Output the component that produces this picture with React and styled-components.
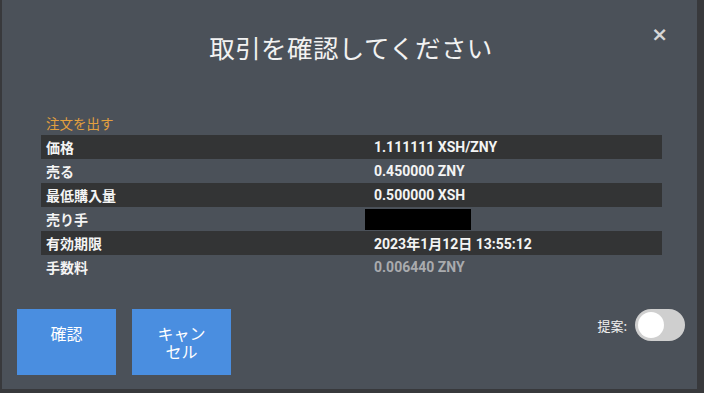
import React from 'react';
import styled, { createGlobalStyle } from 'styled-components';

const GlobalStyle = createGlobalStyle`
  html, body {
    margin: 0;
    padding: 0;
    background: #38393c;
    overflow: hidden;
  }
  body {
    font-family: Roboto, "Noto Sans CJK JP", sans-serif;
  }
`;

const Page = styled.div`
  width: 704px;
  height: 393px;
  padding: 0 7px 4px 2px;
  box-sizing: border-box;
`;

const Modal = styled.div`
  position: relative;
  height: 100%;
  background: #4b5159;
  display: flex;
  flex-direction: column;
  padding: 0 12px 14px 15px;
  box-sizing: border-box;
`;

const Title = styled.h1`
  margin: 29px 0 0;
  text-align: center;
  font-family: "Noto Sans CJK JP", sans-serif;
  font-weight: 400;
  font-size: 25.5px;
  line-height: 36px;
  color: #f2f2f2;
  letter-spacing: 0.4px;
`;

const Close = styled.button`
  position: absolute;
  top: 24px;
  right: 29px;
  background: none;
  border: 0;
  padding: 0;
  color: #d6d6d6;
  font-family: "DejaVu Sans", sans-serif;
  font-size: 20px;
  line-height: 20px;
  font-weight: bold;
  cursor: pointer;
`;

const Details = styled.section`
  margin: 49px 23px 0 24px;
`;

const SectionLabel = styled.div`
  font-family: "Noto Sans CJK JP", sans-serif;
  color: #e3a03e;
  font-size: 13.5px;
  line-height: 18px;
  padding-left: 5px;
  margin-bottom: 3px;
`;

const Row = styled.div`
  display: grid;
  grid-template-columns: 328px 1fr;
  height: 24px;
  align-items: center;
  background: ${(p) => (p.$dark ? '#333435' : 'transparent')};
`;

const Label = styled.span`
  padding-left: 5px;
  font-family: "Noto Sans CJK JP", sans-serif;
  font-weight: 700;
  font-size: 14px;
  color: #f4f4f4;
`;

const Value = styled.span`
  padding-left: 5px;
  font-family: Roboto, "Noto Sans CJK JP", sans-serif;
  font-weight: 700;
  font-size: 14px;
  color: ${(p) => (p.$muted ? '#a9abae' : '#f4f4f4')};
`;

const Redacted = styled.span`
  display: block;
  margin-left: -4px;
  width: 106px;
  height: 21px;
  background: #000;
`;

const Footer = styled.div`
  margin-top: auto;
  display: flex;
  align-items: flex-start;
  gap: 16px;
`;

const ActionButton = styled.button`
  width: 99px;
  height: 66px;
  border: 0;
  background: #4a8ee0;
  color: #fff;
  font-family: "Noto Sans CJK JP", sans-serif;
  font-size: 16px;
  line-height: 1.15;
  font-weight: 400;
  padding: 15px 8px 0;
  display: flex;
  justify-content: center;
  align-items: flex-start;
  cursor: pointer;
`;

const Spacer = styled.div`
  flex: 1;
`;

const SuggestWrap = styled.label`
  display: flex;
  align-items: center;
  gap: 8px;
  font-family: "Noto Sans CJK JP", sans-serif;
  font-size: 13px;
  color: #f0f0f0;
`;

const Track = styled.span`
  width: 50px;
  height: 32px;
  border-radius: 16px;
  background: #cfcfcf;
  display: flex;
  align-items: center;
  padding-left: 3px;
  box-sizing: border-box;
`;

const Knob = styled.span`
  width: 26px;
  height: 26px;
  border-radius: 50%;
  background: #fff;
`;

const rows = [
  { label: '価格', value: '1.111111 XSH/ZNY' },
  { label: '売る', value: '0.450000 ZNY' },
  { label: '最低購入量', value: '0.500000 XSH' },
  { label: '売り手', redacted: true },
  { label: '有効期限', value: '2023年1月12日 13:55:12' },
  { label: '手数料', value: '0.006440 ZNY', muted: true },
];

export default function App() {
  return (
    <>
      <GlobalStyle />
      <Page>
        <Modal>
          <Title>取引を確認してください</Title>
          <Close aria-label="close">×</Close>
          <Details>
            <SectionLabel>注文を出す</SectionLabel>
            {rows.map((r, i) => (
              <Row key={r.label} $dark={i % 2 === 0}>
                <Label>{r.label}</Label>
                {r.redacted ? <Redacted /> : <Value $muted={r.muted}>{r.value}</Value>}
              </Row>
            ))}
          </Details>
          <Footer>
            <ActionButton>確認</ActionButton>
            <ActionButton>キャン<br />セル</ActionButton>
            <Spacer />
            <SuggestWrap>
              提案:
              <Track>
                <Knob />
              </Track>
            </SuggestWrap>
          </Footer>
        </Modal>
      </Page>
    </>
  );
}
